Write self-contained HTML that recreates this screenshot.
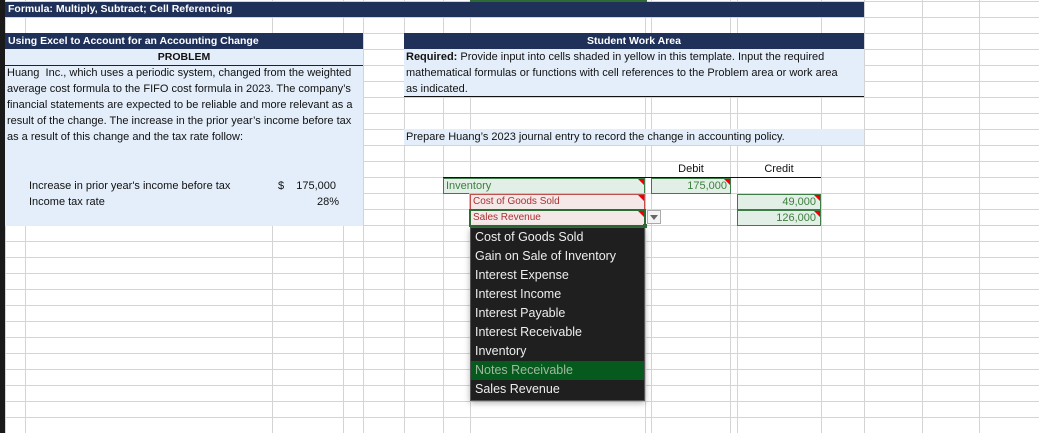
<!DOCTYPE html>
<html><head><meta charset="utf-8"><style>
*{margin:0;padding:0;box-sizing:border-box}
body{width:1039px;height:433px;overflow:hidden;background:#fff;position:relative;font-family:"Liberation Sans",Calibri,sans-serif;font-size:11px;color:#111}
#grid{position:absolute;left:0;top:0;width:1039px;height:433px;z-index:0}
.a{position:absolute;z-index:1}
.vl{position:absolute;top:0;width:1px;height:433px;background:#d4d4d4}
.hl{position:absolute;left:0;width:1039px;height:1px;background:#d4d4d4}
.t{position:absolute;z-index:2;white-space:nowrap;line-height:16px;font-size:11px}
.tri{position:absolute;right:0;top:0;width:0;height:0;border-top:6px solid #e00;border-left:6px solid transparent}
.dd{z-index:3}
.dd div{height:19px;line-height:19px;padding-left:4px;font-size:12.5px;color:#eee;font-family:"Liberation Sans",Helvetica,sans-serif}
</style></head><body>
<div id="grid"></div>
<script>
var g=document.getElementById('grid'),h='';
[5,25,272,343,363,404,443,470,645,651,730,737,821,864,922,979].forEach(function(x){h+='<div class="vl" style="left:'+x+'px"></div>'});
for(var y=1;y<433;y+=16)h+='<div class="hl" style="top:'+y+'px"></div>';
g.innerHTML=h;
</script>
<div class="a" style="left:0;top:0;width:5px;height:433px;background:#1a1a1a"></div>
<div class="a" style="left:5px;top:2px;width:859px;height:15px;background:#1f3059"></div>
<div class="a" style="left:470px;top:0;width:177px;height:2px;background:#2e6b34"></div>
<div class="t" style="left:8px;top:2px;line-height:15px;color:#fff;font-weight:bold;font-size:10.5px">Formula: Multiply, Subtract; Cell Referencing</div>
<div class="a" style="left:5px;top:33px;width:358px;height:16px;background:#1f3059"></div>
<div class="t" style="left:8px;top:33px;color:#fff;font-weight:bold;font-size:10.5px">Using Excel to Account for an Accounting Change</div>
<div class="a" style="left:5px;top:49px;width:358px;height:177px;background:#e3eefa"></div>
<div class="t" style="left:5px;top:49px;width:358px;text-align:center;font-weight:bold;font-size:10.5px">PROBLEM</div>
<div class="a" style="left:5px;top:65px;width:358px;height:1px;background:#222"></div>
<div class="t" style="left:7px;top:65px;line-height:16px;white-space:nowrap;width:356px">Huang&nbsp; Inc., which uses a periodic system, changed from the weighted<br>average cost formula to the FIFO cost formula in 2023. The company’s<br>financial statements are expected to be reliable and more relevant as a<br>result of the change. The increase in the prior year’s income before tax<br>as a result of this change and the tax rate follow:</div>
<div class="t" style="left:29px;top:178px">Increase in prior year's income before tax</div>
<div class="t" style="left:278px;top:178px">$</div>
<div class="t" style="left:280px;top:178px;width:56px;text-align:right">175,000</div>
<div class="t" style="left:290px;top:194px;width:49px;text-align:right">28%</div>
<div class="t" style="left:29px;top:194px">Income tax rate</div>
<div class="a" style="left:404px;top:33px;width:460px;height:16px;background:#1f3059"></div>
<div class="t" style="left:404px;top:33px;width:460px;text-align:center;color:#fff;font-weight:bold;font-size:10.5px">Student Work Area</div>
<div class="a" style="left:404px;top:49px;width:460px;height:48px;background:#e3eefa"></div>
<div class="a" style="left:404px;top:96px;width:460px;height:1px;background:#111"></div>
<div class="t" style="left:406px;top:49px"><b>Required:</b> Provide input into cells shaded in yellow in this template. Input the required</div>
<div class="t" style="left:406px;top:65px">mathematical formulas or functions with cell references to the Problem area or work area</div>
<div class="t" style="left:406px;top:81px">as indicated.</div>
<div class="a" style="left:404px;top:129px;width:460px;height:16px;background:#e3eefa"></div>
<div class="t" style="left:406px;top:129px">Prepare Huang’s 2023 journal entry to record the change in accounting policy.</div>
<div class="t" style="left:651px;top:161px;width:80px;text-align:center">Debit</div>
<div class="t" style="left:737px;top:161px;width:84px;text-align:center">Credit</div>
<div class="a" style="left:443px;top:177px;width:378px;height:1px;background:#111"></div>
<div class="a" style="left:443px;top:178px;width:202px;height:16px;background:#e2efe6;border:1px solid #3e7c47"><div class="tri"></div></div>
<div class="t" style="left:446px;top:178px;color:#3d7f3d">Inventory</div>
<div class="a" style="left:651px;top:178px;width:80px;height:16px;background:#e2efe6;border:1px solid #3e7c47"><div class="tri"></div></div>
<div class="t" style="left:651px;top:178px;width:76px;text-align:right;color:#3d7f3d">175,000</div>
<div class="a" style="left:470px;top:194px;width:175px;height:16px;background:#f5e8e8;border:1px solid #c0504d;outline:1px solid #e8b0b0"><div class="tri"></div></div>
<div class="t" style="left:473px;top:194px;color:#a83232;font-size:10px">Cost of Goods Sold</div>
<div class="a" style="left:469px;top:209px;width:177px;height:18px;background:#f5e8e8;border:2px solid #2e6b34"><div class="tri"></div></div>
<div class="a" style="left:643px;top:224px;width:4px;height:4px;background:#2e6b34;z-index:4"></div>
<div class="t" style="left:473px;top:210px;color:#a83232;font-size:10px">Sales Revenue</div>
<div class="a" style="left:647px;top:210px;width:14px;height:14px;background:#f4f4f4;border:1px solid #aaa"></div>
<div class="a" style="left:650px;top:215px;width:0;height:0;border-left:4px solid transparent;border-right:4px solid transparent;border-top:5px solid #666;z-index:2"></div>
<div class="a" style="left:737px;top:194px;width:84px;height:16px;background:#e2efe6;border:1px solid #3e7c47"><div class="tri"></div></div>
<div class="t" style="left:737px;top:194px;width:79px;text-align:right;color:#3d7f3d">49,000</div>
<div class="a" style="left:737px;top:210px;width:84px;height:16px;background:#e2efe6;border:1px solid #3e7c47"><div class="tri"></div></div>
<div class="t" style="left:737px;top:210px;width:79px;text-align:right;color:#3d7f3d">126,000</div>
<div class="a dd" style="left:470px;top:227px;width:175px;height:174px;background:#1f1f1f;border:1px solid #555;box-shadow:0 2px 6px rgba(0,0,0,.3)">
<div>Cost of Goods Sold</div><div>Gain on Sale of Inventory</div><div>Interest Expense</div><div>Interest Income</div><div>Interest Payable</div><div>Interest Receivable</div><div>Inventory</div><div style="background:#075a1d;color:#9fb89f">Notes Receivable</div><div>Sales Revenue</div>
</div>
</body></html>
